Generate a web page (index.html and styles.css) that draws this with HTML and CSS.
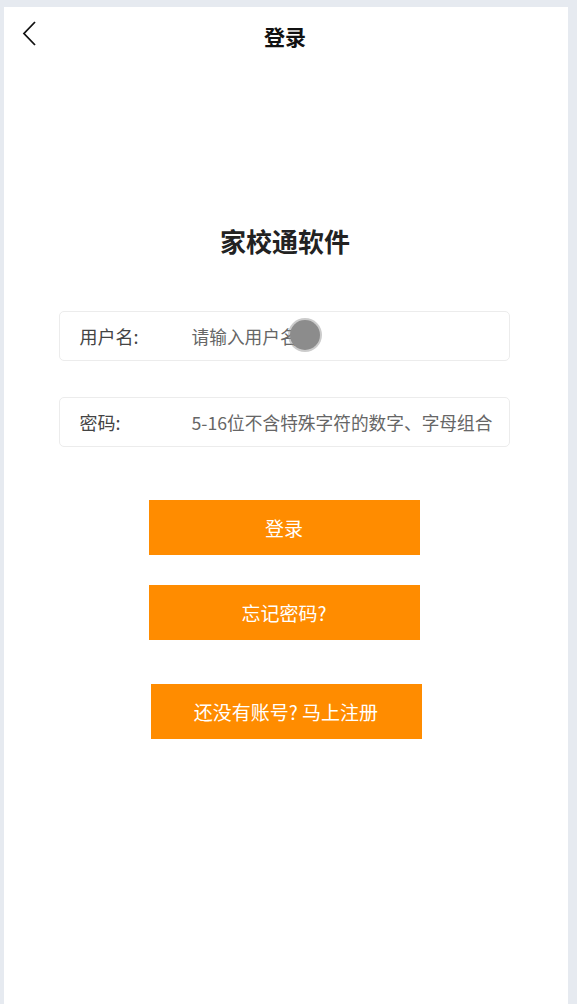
FILE: index.html
```html
<!DOCTYPE html>
<html lang="zh">
<head>
<meta charset="utf-8">
<title>登录</title>
<link rel="stylesheet" href="styles.css">
</head>
<body>
<div class="page">
  <header class="nav">
    <svg class="back" width="16" height="26" viewBox="0 0 16 26"><path d="M13 1 L2 12.5 L13 24" fill="none" stroke="#111" stroke-width="1.8"/></svg>
    <h1 class="nav-title">登录</h1>
  </header>
  <main class="content">
    <h2 class="app-name">家校通软件</h2>
    <div class="field">
      <span class="label">用户名:</span>
      <span class="placeholder">请输入用户名</span>
      <span class="touch"></span>
    </div>
    <div class="field">
      <span class="label">密码:</span>
      <span class="placeholder">5-16位不含特殊字符的数字、字母组合</span>
    </div>
    <div class="actions">
      <button class="btn">登录</button>
      <button class="btn">忘记密码?</button>
      <button class="btn btn-register">还没有账号? 马上注册</button>
    </div>
  </main>
</div>
</body>
</html>
```
FILE: styles.css
```css
html, body {
  margin: 0;
  padding: 0;
  height: 100%;
}
body {
  background: #e6eaf0;
  font-family: "Noto Sans CJK SC", "Noto Sans", sans-serif;
}
.page {
  margin: 7px 9px 0 4px;
  background: #fff;
  min-height: 997px;
  box-sizing: border-box;
}
.nav {
  position: relative;
  height: 62px;
  display: flex;
  align-items: center;
  justify-content: center;
}
.back {
  position: absolute;
  left: 18px;
  top: 14px;
}
.nav-title {
  margin: 0;
  font-size: 21px;
  font-weight: 700;
  color: #111;
  position: relative;
  top: -2px;
  left: -1px;
}
.content {
  display: flex;
  flex-direction: column;
  align-items: center;
}
.app-name {
  margin: 150px 0 0 0;
  font-size: 26px;
  font-weight: 700;
  color: #222;
  line-height: 44px;
  position: relative;
  left: -1px;
}
.field {
  position: relative;
  box-sizing: border-box;
  width: 451px;
  height: 50px;
  margin-left: -4px;
  border: 1px solid #ececec;
  border-radius: 5px;
  display: flex;
  align-items: center;
  margin-top: 48px;
}
.field + .field {
  margin-top: 36px;
}
.label {
  width: 112px;
  padding-left: 20px;
  font-size: 18px;
  color: #444;
  flex: none;
}
.placeholder {
  font-size: 17.7px;
  color: #666;
  white-space: nowrap;
}
.touch {
  position: absolute;
  left: 230px;
  top: 8px;
  width: 30px;
  height: 30px;
  border-radius: 50%;
  background: #8c8c8c;
  box-shadow: 0 0 0 2px rgba(140, 140, 140, 0.45);
}
.actions {
  display: flex;
  flex-direction: column;
  align-items: center;
  margin-top: 53px;
}
.btn {
  width: 271px;
  height: 55px;
  border: none;
  background: #ff8c00;
  color: #fff;
  font-family: "Noto Sans CJK SC", "Noto Sans", sans-serif;
  font-size: 19px;
  padding: 0;
  margin-left: -4px;
}
.btn + .btn {
  margin-top: 30px;
}
.btn-register {
  margin-top: 44px !important;
  margin-left: 0;
}
```
